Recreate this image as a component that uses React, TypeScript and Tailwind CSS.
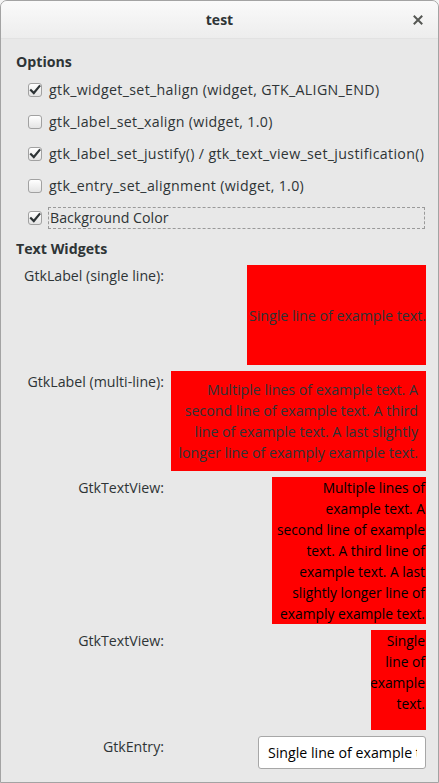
import React from "react";

const font = { fontFamily: '"Open Sans", "Noto Sans", sans-serif' };

function CheckBox({ checked }: { checked: boolean }) {
  return (
    <span className="w-[14px] h-[14px] shrink-0 rounded-[3px] border border-[#a1a1a1] bg-gradient-to-b from-[#ffffff] to-[#e4e4e4] flex items-center justify-center">
      {checked && (
        <svg width="12" height="12" viewBox="0 0 12 12">
          <path d="M2 6.2 L4.8 9 L10.4 2.2" fill="none" stroke="#2e3436" strokeWidth="2.2" strokeLinecap="square" />
        </svg>
      )}
    </span>
  );
}

function OptionRow({ checked, label, focused }: { checked: boolean; label: string; focused?: boolean }) {
  return (
    <div className="h-[32px] flex items-center pl-[12px]">
      <CheckBox checked={checked} />
      {focused ? (
        <span className="ml-[6px] h-[22px] flex-1 mr-[1px] flex items-center pl-[1px] border border-dashed border-[#9a9a9a]">
          {label}
        </span>
      ) : (
        <span className="ml-[7px] tracking-[0.33px]">{label}</span>
      )}
    </div>
  );
}

function FieldLabel({ children }: { children: React.ReactNode }) {
  return <div className="text-right leading-[21px] whitespace-nowrap text-[#2e3436]">{children}</div>;
}

export default function App() {
  return (
    <div className="w-[439px] h-[783px] bg-[#f4f4f4] text-[14.2px] text-[#2e3436]" style={font}>
      <div className="h-full flex flex-col border border-[#a3a3a3] rounded-t-[7px] bg-[#e8e8e8] overflow-hidden">
        <header className="h-[38px] shrink-0 grid grid-cols-[1fr_auto_1fr] items-center bg-gradient-to-b from-[#fafafa] to-[#ededed] border-b border-[#e2e2e2]">
          <span />
          <span className="font-bold text-[14px] text-[#2e3436]">test</span>
          <span className="flex justify-end pr-[15px]">
            <svg width="10" height="10" viewBox="0 0 10 10">
              <path d="M1.5 1.5 L8.5 8.5 M8.5 1.5 L1.5 8.5" stroke="#555753" strokeWidth="2" strokeLinecap="square" />
            </svg>
          </span>
        </header>

        <main className="flex-1 pl-[15px] pr-[12px] pt-[13px]">
          <div className="h-[20px] leading-[20px] font-bold">Options</div>
          <div className="mt-[2px]">
            <OptionRow checked label="gtk_widget_set_halign (widget, GTK_ALIGN_END)" />
            <OptionRow checked={false} label="gtk_label_set_xalign (widget, 1.0)" />
            <OptionRow checked label="gtk_label_set_justify() / gtk_text_view_set_justification()" />
            <OptionRow checked={false} label="gtk_entry_set_alignment (widget, 1.0)" />
            <OptionRow checked label="Background Color" focused />
          </div>

          <div className="mt-[5px] h-[20px] leading-[20px] font-bold">Text Widgets</div>

          <div className="mt-[6px] grid grid-cols-[148px_255px] gap-x-[7px] gap-y-[6px]">
            <FieldLabel>GtkLabel (single line):</FieldLabel>
            <div className="justify-self-end w-[179px] h-[100px] bg-[#ff0000] flex items-center justify-end overflow-hidden">
              <span className="whitespace-nowrap leading-[21px]">Single line of example text.</span>
            </div>

            <FieldLabel>GtkLabel (multi-line):</FieldLabel>
            <div className="justify-self-end w-[255px] h-[100px] bg-[#ff0000] flex flex-col justify-center items-end pr-[8px] leading-[21px] whitespace-nowrap text-right">
              <span>Multiple lines of example text. A</span>
              <span>second line of example text. A third</span>
              <span>line of example text. A last slightly</span>
              <span>longer line of examply example text.</span>
            </div>

            <FieldLabel>GtkTextView:</FieldLabel>
            <div className="justify-self-end w-[154px] h-[147px] bg-[#ff0000] flex flex-col items-end leading-[21px] whitespace-nowrap text-black text-[13.8px] pr-[1px]">
              <span>Multiple lines of</span>
              <span>example text. A</span>
              <span>second line of example</span>
              <span>text. A third line of</span>
              <span>example text. A last</span>
              <span>slightly longer line of</span>
              <span>examply example text.</span>
            </div>

            <FieldLabel>GtkTextView:</FieldLabel>
            <div className="justify-self-end w-[55px] h-[100px] bg-[#ff0000] flex flex-col items-end leading-[21px] whitespace-nowrap text-black text-[13.8px] pr-[1px] overflow-hidden">
              <span>Single</span>
              <span>line of</span>
              <span>example</span>
              <span>text.</span>
            </div>

            <FieldLabel>GtkEntry:</FieldLabel>
            <div className="justify-self-end w-[168px] h-[33px] bg-white border border-[#a7a7a7] rounded-[3px] flex items-center pl-[9px] pr-[8px] overflow-hidden text-black">
              <span className="whitespace-nowrap overflow-hidden">Single line of example t</span>
            </div>
          </div>
        </main>
      </div>
    </div>
  );
}
